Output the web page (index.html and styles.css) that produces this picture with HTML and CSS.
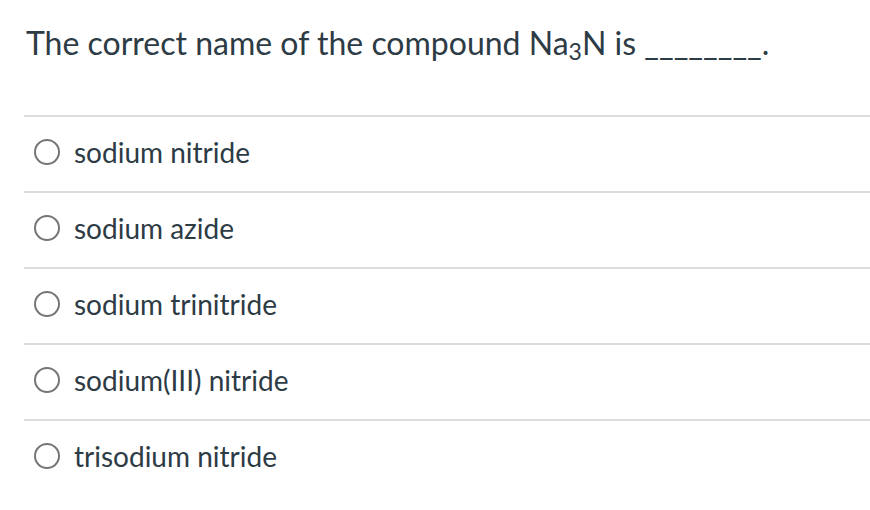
FILE: index.html
```html
<!DOCTYPE html>
<html>
<head>
<meta charset="utf-8">
<link rel="stylesheet" href="styles.css">
</head>
<body>
<div class="question">
  <div class="prompt">The correct name of the compound Na<sub>3</sub>N is <span class="blank">________</span>.</div>
  <div class="answers">
    <label class="answer"><span class="radio"></span><span class="label">sodium nitride</span></label>
    <label class="answer"><span class="radio"></span><span class="label">sodium azide</span></label>
    <label class="answer"><span class="radio"></span><span class="label">sodium trinitride</span></label>
    <label class="answer"><span class="radio"></span><span class="label">sodium(III) nitride</span></label>
    <label class="answer"><span class="radio"></span><span class="label">trisodium nitride</span></label>
  </div>
</div>
</body>
</html>
```
FILE: styles.css
```css
html, body {
  margin: 0;
  padding: 0;
  background: #fff;
}
body {
  font-family: Lato, "Liberation Sans", sans-serif;
  color: #2d3b45;
}
.question {
  padding-left: 24px;
}
.prompt {
  font-size: 32px;
  line-height: 38px;
  padding: 24px 0 0 2px;
  height: 91px;
  box-sizing: content-box;
  white-space: nowrap;
}
.prompt sub {
  font-size: 0.72em;
  vertical-align: -0.22em;
  line-height: 0;
}
.answers {
  display: flex;
  flex-direction: column;
}
.answer {
  display: flex;
  align-items: center;
  gap: 14px;
  height: 74px;
  box-sizing: content-box;
  border-top: 2px solid #dcdcdc;
  padding: 0 0 0 10px;
}
.answer > * {
  margin-bottom: 4px;
}
.radio {
  width: 22px;
  height: 22px;
  border: 2px solid #767676;
  border-radius: 50%;
  flex: none;
}
.label {
  font-size: 28px;
}
```
